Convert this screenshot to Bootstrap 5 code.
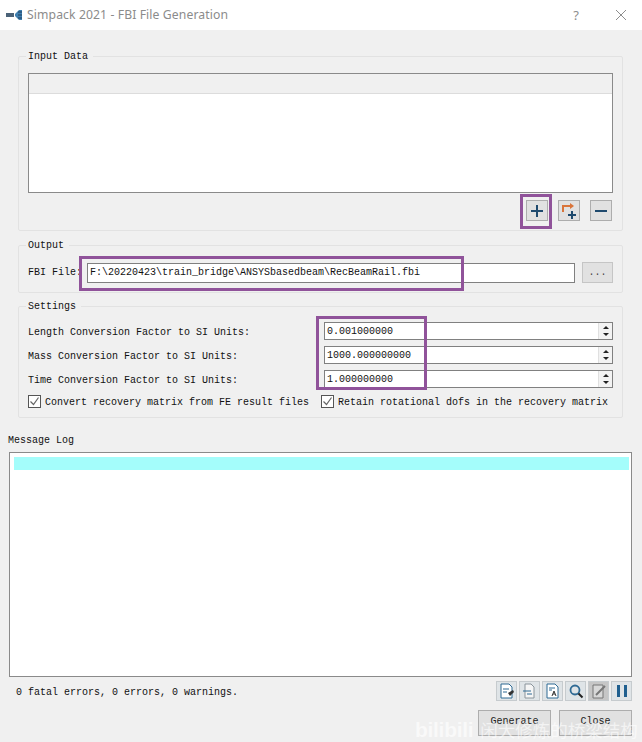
<!DOCTYPE html>
<html lang="en">
<head>
<meta charset="utf-8">
<title>Simpack 2021 - FBI File Generation</title>
<link href="https://cdn.jsdelivr.net/npm/bootstrap@5.3.0/dist/css/bootstrap.min.css" rel="stylesheet">
<style>
html,body{height:742px;overflow:hidden}
body{width:642px;background:#f0f0f0;font-family:"Liberation Mono",monospace;font-size:10px;line-height:12px;color:#111;position:relative}
.titlebar{height:30px;background:#fff;padding:0 0 0 6px;font-family:"Noto Sans","Liberation Sans",sans-serif;font-size:12.2px;color:#8b8b8b;letter-spacing:.1px}
.titlebar .ttl{margin-left:4px}
.winbtn{width:16px;text-align:center;color:#8d8d8d;font-size:13px}
.closex{margin:0 15px 0 31px}
.grp{border:1px solid #e2e2e2;border-radius:2px;margin:0;padding:0 9px;min-width:0}
.grp legend{float:none;width:auto;font-size:10px;line-height:12px;padding:2px 5px 0 2px;margin:0 0 0 -2px}
.grp-input{margin:19px 19px 0 18px;height:182px}
.grp-output{margin:7px 19px 0 18px;height:55px}
.grp-settings{margin:6px 19px 0 18px;height:119px}
.datatbl{height:120px;margin-top:10px;border:1px solid #8a8a8a;background:#fff}
.datahead{height:20px;background:#f0f0f0;border-bottom:1px solid #dcdcdc}
.tbtn{width:22px;height:21px;background:#e1e1e1;border:1px solid #adadad;padding:0;display:flex;align-items:center;justify-content:center;border-radius:0}
.tool-row{margin-top:7px;margin-right:1px;gap:10px}
.fileinp{height:20px;background:#fff;border:1px solid #808080;padding:0 2px;flex:1 1 auto;line-height:18px;white-space:nowrap;overflow:hidden}
.dots{width:31px;height:21px;background:#e1e1e1;border:1px solid #c5c5c5;margin-left:7px;padding:0;font-size:10px;line-height:18px;color:#444;border-radius:0;flex:none}
.file-row{margin-top:10px}
.lbl-file{width:59px;flex:none;padding-top:1px}
.setrow{height:18px;margin-bottom:6px}
.setrow-first{margin-top:9px}
.lbl-set{width:296px;flex:none;padding-top:3px}
.spin{flex:1 1 auto;height:18px;background:#fff;border:1px solid #808080;padding:0 0 0 2px;line-height:18px;font-size:10px;display:flex;justify-content:space-between}
.spinbtns{width:14px;height:16px;border-left:1px solid #e0e0e0;background:#f3f3f3;display:flex;flex-direction:column;align-items:center;justify-content:space-evenly}
.up{width:0;height:0;border:3px solid transparent;border-top:0;border-bottom:3px solid #222}
.down{width:0;height:0;border:3px solid transparent;border-bottom:0;border-top:3px solid #222}
.chk{width:13px;height:13px;background:#fff;border:1px solid #555;flex:none;display:flex;align-items:center;justify-content:center;margin-right:4px}
.checks{margin-top:3px}
.chkitem-a{width:293px;flex:none}
.chktxt{padding-top:3px}
.log-title{margin:17px 0 5px 8px;height:12px}
.logbox{margin:0 10px 0 9px;height:225px;background:#fff;border:1px solid #8a8a8a;padding:4px 2px 4px 4px}
.cyan{height:13px;background:#a4fdfb}
.statusrow{margin:3px 10px 0 16px;height:22px}
.statustxt{padding-top:3px}
.icons{gap:2px}
.ibtn{width:21px;height:20px;background:#dfe4e7;border:1px solid #c6cbce;display:flex;align-items:center;justify-content:center;padding:0;border-radius:0}
.ibtn.sel{background:#c6c6c6}
.bottom-row{margin:8px 10px 0 0;gap:8px}
.pbtn{width:73px;height:26px;background:#e1e1e1;border:1px solid #adadad;padding:0 0 2px;font-size:10px;color:#222;border-radius:0}
.hl{position:absolute;border:3px solid #90539a;pointer-events:none}
.hl1{left:520px;top:194px;width:32px;height:35px}
.hl2{left:79px;top:256px;width:385px;height:35px}
.hl3{left:316px;top:316px;width:111px;height:74px}
.wm{position:absolute;left:415px;top:718px;font-family:"Noto Sans CJK SC","Noto Sans",sans-serif;font-size:17.5px;line-height:24px;color:#fff;opacity:.6;white-space:nowrap}
.wm b{font-family:"Liberation Sans",sans-serif;font-weight:700;font-size:21px;margin-right:7px;letter-spacing:-.3px}
</style>
</head>
<body>
<div class="titlebar d-flex align-items-center">
  <svg width="17" height="12" viewBox="0 0 17 12"><rect x="0" y="4" width="8" height="4" fill="#4b6278"/><path d="M9 5l4-4h3v10h-3l-4-4z" fill="#3f7fb0"/><path d="M12 3h4M12 6h4M12 9h4" stroke="#1e3f5c"/></svg>
  <span class="ttl flex-grow-1">Simpack 2021 - FBI File Generation</span>
  <span class="winbtn">?</span>
  <svg class="closex" width="12" height="12" viewBox="0 0 12 12"><path d="M1 1l10 10M11 1L1 11" stroke="#8d8d8d"/></svg>
</div>

<fieldset class="grp grp-input">
  <legend>Input Data</legend>
  <div class="datatbl"><div class="datahead"></div></div>
  <div class="d-flex justify-content-end tool-row">
    <button class="tbtn" aria-label="Add"><svg width="14" height="14" viewBox="0 0 14 14"><path d="M7 1v12M1 7h12" stroke="#1f4a6e" stroke-width="2"/></svg></button>
    <button class="tbtn" aria-label="Add from"><svg width="18" height="18" viewBox="0 0 18 18"><path d="M3 10V4h9" fill="none" stroke="#d9743a" stroke-width="2"/><path d="M10 1l4 3-4 3z" fill="#d9743a"/><path d="M12 9v8M8 13h8" stroke="#1f4a6e" stroke-width="2"/></svg></button>
    <button class="tbtn" aria-label="Remove"><svg width="14" height="14" viewBox="0 0 14 14"><path d="M1 7h12" stroke="#1f4a6e" stroke-width="2"/></svg></button>
  </div>
</fieldset>

<fieldset class="grp grp-output">
  <legend>Output</legend>
  <div class="d-flex align-items-center file-row">
    <span class="lbl-file">FBI File:</span>
    <div class="fileinp">F:\20220423\train_bridge\ANSYSbasedbeam\RecBeamRail.fbi</div>
    <button class="dots">...</button>
  </div>
</fieldset>

<fieldset class="grp grp-settings">
  <legend>Settings</legend>
  <div class="d-flex align-items-center setrow setrow-first"><span class="lbl-set">Length Conversion Factor to SI Units:</span><div class="spin"><span>0.001000000</span><span class="spinbtns"><i class="up"></i><i class="down"></i></span></div></div>
  <div class="d-flex align-items-center setrow"><span class="lbl-set">Mass Conversion Factor to SI Units:</span><div class="spin"><span>1000.000000000</span><span class="spinbtns"><i class="up"></i><i class="down"></i></span></div></div>
  <div class="d-flex align-items-center setrow"><span class="lbl-set">Time Conversion Factor to SI Units:</span><div class="spin"><span>1.000000000</span><span class="spinbtns"><i class="up"></i><i class="down"></i></span></div></div>
  <div class="d-flex checks">
    <div class="d-flex align-items-center chkitem-a"><span class="chk"><svg width="11" height="11" viewBox="0 0 11 11"><path d="M1.5 5.5l3 3 5-7" fill="none" stroke="#666" stroke-width="1.2"/></svg></span><span class="chktxt">Convert recovery matrix from FE result files</span></div>
    <div class="d-flex align-items-center"><span class="chk"><svg width="11" height="11" viewBox="0 0 11 11"><path d="M1.5 5.5l3 3 5-7" fill="none" stroke="#666" stroke-width="1.2"/></svg></span><span class="chktxt">Retain rotational dofs in the recovery matrix</span></div>
  </div>
</fieldset>

<div class="log-title">Message Log</div>
<div class="logbox"><div class="cyan"></div></div>

<div class="d-flex justify-content-between align-items-center statusrow">
  <span class="statustxt">0 fatal errors, 0 errors, 0 warnings.</span>
  <div class="d-flex icons">
    <button class="ibtn" aria-label="Save"><svg width="16" height="16" viewBox="0 0 16 16"><path d="M2 1h8l3 3v11H2z" fill="#fff" stroke="#2f6a94"/><path d="M4 6h6M4 9h4" stroke="#2f6a94"/><path d="M9 10l5-3 1 2-4 4z" fill="#333"/></svg></button>
    <button class="ibtn" aria-label="Copy"><svg width="16" height="16" viewBox="0 0 16 16"><path d="M3 1h6l3 3v11H3z" fill="#f5f5f5" stroke="#8a949b"/><path d="M1 8h8M5 11h5" stroke="#2f6a94"/></svg></button>
    <button class="ibtn" aria-label="Text"><svg width="16" height="16" viewBox="0 0 16 16"><path d="M2 1h8l3 3v11H2z" fill="#fff" stroke="#2f6a94"/><path d="M4 5h6M4 7h3" stroke="#2f6a94"/><path d="M7 13l2-5 2 5M8 11h2" fill="none" stroke="#333"/></svg></button>
    <button class="ibtn" aria-label="Search"><svg width="16" height="16" viewBox="0 0 16 16"><circle cx="7" cy="7" r="4.5" fill="none" stroke="#2f6a94" stroke-width="1.8"/><path d="M10.5 10.5l4 4" stroke="#222" stroke-width="2"/></svg></button>
    <button class="ibtn sel" aria-label="Notes"><svg width="16" height="16" viewBox="0 0 16 16"><path d="M2 2h10v13H2z" fill="#d8d8d8" stroke="#777"/><path d="M5 12l9-9" stroke="#777" stroke-width="2"/></svg></button>
    <button class="ibtn" aria-label="Pause"><svg width="14" height="14" viewBox="0 0 14 14"><path d="M2 1h3v12H2zM9 1h3v12H9z" fill="#1f5f8f"/></svg></button>
  </div>
</div>

<div class="d-flex justify-content-end bottom-row">
  <button class="pbtn">Generate</button>
  <button class="pbtn">Close</button>
</div>

<div class="hl hl1"></div>
<div class="hl hl2"></div>
<div class="hl hl3"></div>
<div class="wm"><b>bilibili</b>闲大修炼的桥梁结构</div>
</body>
</html>
